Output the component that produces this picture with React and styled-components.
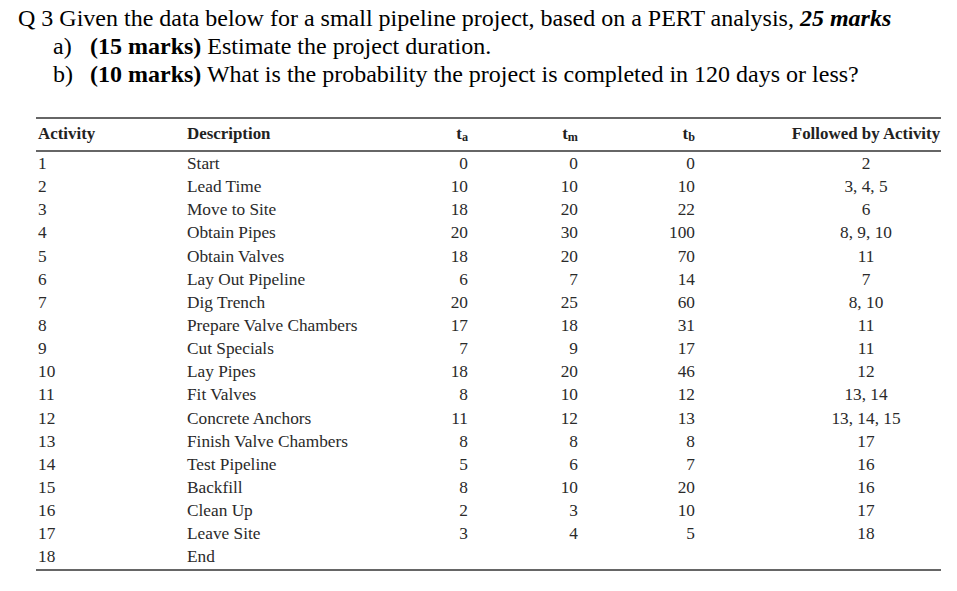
import React from 'react';
import styled, { createGlobalStyle } from 'styled-components';

const GlobalStyle = createGlobalStyle`
  html, body {
    margin: 0;
    padding: 0;
    background: #fff;
  }
  body {
    font-family: "Liberation Serif", "Times New Roman", serif;
    color: #000;
  }
`;

const rows = [
  ['1', 'Start', '0', '0', '0', '2'],
  ['2', 'Lead Time', '10', '10', '10', '3, 4, 5'],
  ['3', 'Move to Site', '18', '20', '22', '6'],
  ['4', 'Obtain Pipes', '20', '30', '100', '8, 9, 10'],
  ['5', 'Obtain Valves', '18', '20', '70', '11'],
  ['6', 'Lay Out Pipeline', '6', '7', '14', '7'],
  ['7', 'Dig Trench', '20', '25', '60', '8, 10'],
  ['8', 'Prepare Valve Chambers', '17', '18', '31', '11'],
  ['9', 'Cut Specials', '7', '9', '17', '11'],
  ['10', 'Lay Pipes', '18', '20', '46', '12'],
  ['11', 'Fit Valves', '8', '10', '12', '13, 14'],
  ['12', 'Concrete Anchors', '11', '12', '13', '13, 14, 15'],
  ['13', 'Finish Valve Chambers', '8', '8', '8', '17'],
  ['14', 'Test Pipeline', '5', '6', '7', '16'],
  ['15', 'Backfill', '8', '10', '20', '16'],
  ['16', 'Clean Up', '2', '3', '10', '17'],
  ['17', 'Leave Site', '3', '4', '5', '18'],
  ['18', 'End', '', '', '', ''],
];

const Page = styled.div`
  width: 957px;
  height: 591px;
  box-sizing: border-box;
  padding: 4px 0 0 18px;
  overflow: hidden;
`;

const Question = styled.div`
  font-size: 24px;
  line-height: 28px;
`;

const Part = styled.div`
  display: flex;
  padding-left: 35px;
`;

const Label = styled.span`
  width: 37px;
`;

const Table = styled.div`
  margin: 29px 0 0 18px;
  width: 905px;
  display: grid;
  grid-template-columns: 151px 233px 48px 110px 117px 1fr;
  border-top: 2px solid #666;
  border-bottom: 2px solid #666;
  font-size: 17.3px;
  color: #2a2a2a;
`;

const Head = styled.div`
  height: 30px;
  display: flex;
  align-items: center;
  justify-content: ${(p) => p.$align || 'flex-start'};
  padding-left: ${(p) => (p.$first ? 2 : p.$pad || 0)}px;
  padding-bottom: 1px;
  font-size: 16.9px;
  font-weight: bold;
  border-bottom: 2px solid #666;
  color: #222;
`;

const Cell = styled.div`
  height: 23.15px;
  line-height: 23.15px;
  white-space: nowrap;
  text-align: ${(p) => p.$align || 'left'};
  padding-left: ${(p) => (p.$first ? 2 : p.$pad || 0)}px;
`;

const Sub = styled.span`
  font-size: 0.72em;
  position: relative;
  top: 0.25em;
`;

const cols = [
  { align: 'left', first: true },
  { align: 'left' },
  { align: 'right' },
  { align: 'right' },
  { align: 'right' },
  { align: 'center', pad: 96 },
];

const headAlign = { left: 'flex-start', right: 'flex-end', center: 'center' };

export default function App() {
  const heads = [
    'Activity',
    'Description',
    <>t<Sub>a</Sub></>,
    <>t<Sub>m</Sub></>,
    <>t<Sub>b</Sub></>,
    'Followed by Activity',
  ];
  return (
    <>
      <GlobalStyle />
      <Page>
        <Question>
          <div>
            Q 3 Given the data below for a small pipeline project, based on a PERT analysis,{' '}
            <b><i>25 marks</i></b>
          </div>
          <Part>
            <Label>a)</Label>
            <span><b>(15 marks)</b> Estimate the project duration.</span>
          </Part>
          <Part>
            <Label>b)</Label>
            <span><b>(10 marks)</b> What is the probability the project is completed in 120 days or less?</span>
          </Part>
        </Question>
        <Table>
          {heads.map((h, i) => (
            <Head key={i} $align={headAlign[cols[i].align]} $first={cols[i].first} $pad={cols[i].pad}>
              {h}
            </Head>
          ))}
          {rows.map((r) =>
            r.map((v, i) => (
              <Cell key={r[0] + '-' + i} $align={cols[i].align} $first={cols[i].first} $pad={cols[i].pad}>
                {v}
              </Cell>
            ))
          )}
        </Table>
      </Page>
    </>
  );
}
